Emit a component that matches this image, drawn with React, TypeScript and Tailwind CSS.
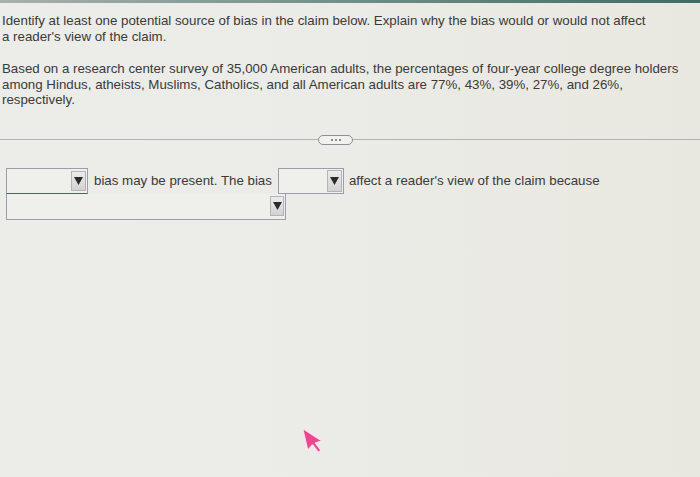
import React from 'react';

const Arrow: React.FC<{ className?: string }> = ({ className = '' }) => (
  <span
    className={`flex items-center justify-center border border-[#b4b4b8] bg-gradient-to-b from-[#ececec] to-[#d2d2d2] ${className}`}
  >
    <svg width="9" height="8" viewBox="0 0 9 8">
      <path d="M0 0 H9 L4.5 8 Z" fill="#2b2b2b" />
    </svg>
  </span>
);

const Select: React.FC<{ className: string; arrow: string }> = ({ className, arrow }) => (
  <div className={`flex items-center justify-end border border-[#9c9cac] bg-[#efefec] pr-[1px] ${className}`}>
    <Arrow className={arrow} />
  </div>
);

const App: React.FC = () => (
  <div
    className="relative h-[477px] w-[700px] overflow-hidden bg-gradient-to-r from-[#ecece9] via-[#ebebe7] to-[#e9e8e0] text-[13.3px] leading-[15.5px] text-[#3a3a3a]"
    style={{ fontFamily: '"Liberation Sans", Arial, sans-serif' }}
  >
    <div className="h-[3px] bg-gradient-to-r from-[#a9b0ae] via-[#6f8f87] to-[#3e6d61]" />

    <div className="pl-[2px] pt-[10px] pr-2">
      <p>
        Identify at least one potential source of bias in the claim below. Explain why the bias would or would not affect
        <br />a reader's view of the claim.
      </p>
      <p className="mt-[17px]">
        Based on a research center survey of 35,000 American adults, the percentages of four-year college degree holders
        <br />
        among Hindus, atheists, Muslims, Catholics, and all American adults are 77%, 43%, 39%, 27%, and 26%,
        <br />
        respectively.
      </p>
    </div>

    <div className="mt-[27px] flex h-[10px] items-center">
      <div className="h-px w-[318px] bg-[#b2b2b2]" />
      <div className="flex h-[10px] w-[35px] items-center justify-center gap-[2px] rounded-full border border-[#8e8e94] bg-[#f1f1ee]">
        <span className="h-[2px] w-[2px] rounded-full bg-[#6a6a70]" />
        <span className="h-[2px] w-[2px] rounded-full bg-[#6a6a70]" />
        <span className="h-[2px] w-[2px] rounded-full bg-[#6a6a70]" />
      </div>
      <div className="h-px flex-1 bg-[#b2b2b2]" />
    </div>

    <div className="mt-[23px] pl-[6px]">
      <div className="flex items-center">
        <Select className="h-[26px] w-[82px] border-b-[#4d5a94]" arrow="h-[20px] w-[15px]" />
        <span className="ml-[6px]">bias may be present. The bias</span>
        <Select className="ml-[6px] h-[26px] w-[66px]" arrow="h-[22px] w-[15px]" />
        <span className="ml-[5px]">affect a reader's view of the claim because</span>
      </div>
      <Select className="h-[26px] w-[280px] border-t-0" arrow="h-[20px] w-[14px]" />
    </div>

    <svg className="absolute left-[302px] top-[424px]" width="24" height="32" viewBox="0 0 24 32">
      <path
        d="M3 2 L20 19 L13 19.5 L17 28 L13.5 29.5 L9.5 21 L3.5 25.5 Z"
        fill="#e9478f"
        stroke="#fbe3ee"
        strokeWidth="1.8"
        strokeLinejoin="round"
        transform="rotate(-12 11 16)"
      />
    </svg>
  </div>
);

export default App;
